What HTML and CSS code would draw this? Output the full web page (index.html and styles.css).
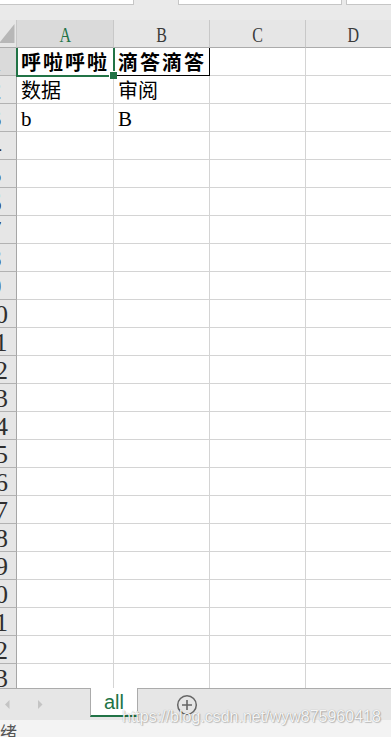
FILE: index.html
```html
<!DOCTYPE html>
<html lang="zh-CN">
<head>
<meta charset="utf-8">
<title>Sheet</title>
<link rel="stylesheet" href="styles.css">
</head>
<body>
<div class="app">
  <div class="topbar">
    <div class="fbox f1"></div>
    <div class="fbox f2"></div>
    <div class="fbox f3"></div>
  </div>

  <div class="colheads">
    <div class="corner">
      <svg width="16" height="27" viewBox="0 0 16 27"><polygon points="0,22 14.5,4 14.5,23 0,23" fill="#b7b7b7"/></svg>
    </div>
    <div class="ch ca sel"><span>A</span></div>
    <div class="ch"><span>B</span></div>
    <div class="ch"><span>C</span></div>
    <div class="ch"><span>D</span></div>
  </div>

  <div class="rows">
    <div class="row">
      <div class="rh sel"><span>1</span></div>
      <div class="c ca a1 cjk bold">呼啦呼啦<div class="selbox"></div><div class="handle"></div></div>
      <div class="c b1 cjk bold">滴答滴答</div>
      <div class="c"></div><div class="c"></div>
    </div>
    <div class="row">
      <div class="rh"><span>2</span></div>
      <div class="c ca cjk">数据</div>
      <div class="c cjk">审阅</div>
      <div class="c"></div><div class="c"></div>
    </div>
    <div class="row">
      <div class="rh"><span>3</span></div>
      <div class="c ca lat">b</div>
      <div class="c lat">B</div>
      <div class="c"></div><div class="c"></div>
    </div>
    <div class="row"><div class="rh"><span>4</span></div><div class="c ca"></div><div class="c"></div><div class="c"></div><div class="c"></div></div>
    <div class="row"><div class="rh"><span>5</span></div><div class="c ca"></div><div class="c"></div><div class="c"></div><div class="c"></div></div>
    <div class="row"><div class="rh"><span>6</span></div><div class="c ca"></div><div class="c"></div><div class="c"></div><div class="c"></div></div>
    <div class="row"><div class="rh"><span>7</span></div><div class="c ca"></div><div class="c"></div><div class="c"></div><div class="c"></div></div>
    <div class="row"><div class="rh"><span>8</span></div><div class="c ca"></div><div class="c"></div><div class="c"></div><div class="c"></div></div>
    <div class="row"><div class="rh"><span>9</span></div><div class="c ca"></div><div class="c"></div><div class="c"></div><div class="c"></div></div>
    <div class="row"><div class="rh"><span>10</span></div><div class="c ca"></div><div class="c"></div><div class="c"></div><div class="c"></div></div>
    <div class="row"><div class="rh"><span>11</span></div><div class="c ca"></div><div class="c"></div><div class="c"></div><div class="c"></div></div>
    <div class="row"><div class="rh"><span>12</span></div><div class="c ca"></div><div class="c"></div><div class="c"></div><div class="c"></div></div>
    <div class="row"><div class="rh"><span>13</span></div><div class="c ca"></div><div class="c"></div><div class="c"></div><div class="c"></div></div>
    <div class="row"><div class="rh"><span>14</span></div><div class="c ca"></div><div class="c"></div><div class="c"></div><div class="c"></div></div>
    <div class="row"><div class="rh"><span>15</span></div><div class="c ca"></div><div class="c"></div><div class="c"></div><div class="c"></div></div>
    <div class="row"><div class="rh"><span>16</span></div><div class="c ca"></div><div class="c"></div><div class="c"></div><div class="c"></div></div>
    <div class="row"><div class="rh"><span>17</span></div><div class="c ca"></div><div class="c"></div><div class="c"></div><div class="c"></div></div>
    <div class="row"><div class="rh"><span>18</span></div><div class="c ca"></div><div class="c"></div><div class="c"></div><div class="c"></div></div>
    <div class="row"><div class="rh"><span>19</span></div><div class="c ca"></div><div class="c"></div><div class="c"></div><div class="c"></div></div>
    <div class="row"><div class="rh"><span>20</span></div><div class="c ca"></div><div class="c"></div><div class="c"></div><div class="c"></div></div>
    <div class="row"><div class="rh"><span>21</span></div><div class="c ca"></div><div class="c"></div><div class="c"></div><div class="c"></div></div>
    <div class="row"><div class="rh"><span>22</span></div><div class="c ca"></div><div class="c"></div><div class="c"></div><div class="c"></div></div>
    <div class="row"><div class="rh"><span>23</span></div><div class="c ca"></div><div class="c"></div><div class="c"></div><div class="c"></div></div>
  </div>

  <div class="tabbar">
    <svg class="nav" width="90" height="31" viewBox="0 0 90 31">
      <polygon points="9.5,11 9.5,20 5,15.5" fill="#c4c4c4"/>
      <polygon points="38,11 38,20 42.5,15.5" fill="#c4c4c4"/>
    </svg>
    <div class="tab">all</div>
    <svg class="add" width="22" height="22" viewBox="0 0 22 22">
      <circle cx="11" cy="11" r="9.3" fill="none" stroke="#666" stroke-width="1.5"/>
      <path d="M11 6v10M6 11h10" stroke="#666" stroke-width="1.6" fill="none"/>
    </svg>
  </div>

  <div class="status"><span>就绪</span></div>

  <div class="wm">https://blog.csdn.net/wyw875960418</div>
</div>
</body>
</html>
```

FILE: styles.css
```css
* { box-sizing: border-box; }
html, body { margin: 0; padding: 0; }
body {
  width: 391px;
  height: 737px;
  overflow: hidden;
  background: #e6e6e6;
  font-family: "Liberation Serif", "Noto Sans CJK SC", serif;
}
.app {
  position: relative;
  width: 391px;
  height: 737px;
  overflow: hidden;
  display: flex;
  flex-direction: column;
}

/* top strip (formula bar remnants) */
.topbar {
  height: 20px;
  flex: none;
  display: flex;
  align-items: flex-start;
  background: #eaeaea;
}
.fbox {
  flex: none;
  height: 5px;
  background: #fff;
  border: 1px solid #c6c6c6;
  border-top: 0;
}
.f1 { width: 135px; margin-left: -1px; }
.f2 { width: 164px; margin-left: 44px; }
.f3 { width: 60px; margin-left: 4px; }

/* column headers */
.colheads {
  height: 28px;
  flex: none;
  display: flex;
  background: #e6e6e6;
}
.corner {
  width: 17px;
  flex: none;
  border-right: 1px solid #c8c8c8;
  border-bottom: 1px solid #ababab;
  display: flex;
}
.corner svg { display: block; }
.ch {
  width: 96px;
  flex: none;
  border-right: 1px solid #c8c8c8;
  border-bottom: 1px solid #ababab;
  text-align: center;
  font-size: 20px;
  line-height: 24px;
  padding-top: 3px;
  color: #3a3a3a;
}
.ch span { display: inline-block; transform: scaleX(0.8); }
.ch.ca { width: 97px; }
.ch.sel { background: #dadada; color: #217346; }

/* grid */
.rows {
  height: 640px;
  flex: none;
  overflow: hidden;
  background: #fff;
}
.row {
  display: flex;
  height: 28px;
}
.rh {
  width: 17px;
  flex: none;
  background: #e6e6e6;
  border-right: 1px solid #a6a6a6;
  border-bottom: 1px solid #b2b2b2;
  overflow: hidden;
}
.rh.sel { background: #dadada; }
.rh span {
  display: block;
  width: 40px;
  margin-left: -25px;
  text-align: center;
  font-size: 26px;
  line-height: 24px;
  padding-top: 3px;
  color: #2f2f2f;
}
.c {
  width: 96px;
  flex: none;
  border-right: 1px solid #d4d4d4;
  border-bottom: 1px solid #d4d4d4;
  padding-left: 4px;
  white-space: nowrap;
  color: #000;
}
.c.ca { width: 97px; }
.cjk {
  font-family: "Noto Sans CJK SC", sans-serif;
  font-size: 20px;
  line-height: 27px;
}
.bold {
  font-weight: 700;
  letter-spacing: 2px;
}
.lat {
  font-family: "Liberation Serif", serif;
  font-size: 21px;
  line-height: 23px;
  padding-top: 4px;
}
.a1 { position: relative; }
.b1 {
  border-right-color: #000;
  border-bottom-color: #000;
}
.selbox {
  position: absolute;
  left: -1px;
  top: -2px;
  width: 99px;
  height: 31px;
  border: 2px solid #217346;
}
.handle {
  position: absolute;
  left: 92px;
  top: 23px;
  width: 8px;
  height: 8px;
  background: #217346;
  border-left: 1px solid #fff;
  border-top: 1px solid #fff;
}

/* sheet tabs */
.tabbar {
  height: 32px;
  flex: none;
  display: flex;
  align-items: flex-start;
  background: #e6e6e6;
  border-top: 1px solid #ababab;
}
.nav { display: block; flex: none; }
.tab {
  width: 48px;
  height: 29px;
  flex: none;
  margin-top: -1px;
  padding-top: 1px;
  background: #fff;
  border-left: 1px solid #ababab;
  border-right: 1px solid #ababab;
  border-bottom: 2px solid #217346;
  text-align: center;
  font-family: "Liberation Sans", sans-serif;
  font-size: 20px;
  line-height: 26px;
  color: #217346;
}
.add {
  display: block;
  flex: none;
  margin-left: 38px;
  margin-top: 5px;
}

/* status bar */
.status {
  flex: 1;
  background: #f3f3f3;
  overflow: hidden;
  white-space: nowrap;
  font-family: "Noto Sans CJK SC", sans-serif;
  font-size: 17px;
  line-height: 17px;
  padding-top: 3px;
  color: #555;
}
.status span { display: inline-block; margin-left: -17px; }

/* watermark overlay */
.wm {
  position: absolute;
  left: 122px;
  top: 709px;
  font-family: "Liberation Sans", sans-serif;
  font-size: 16px;
  line-height: 16px;
  white-space: nowrap;
  color: rgba(255, 255, 255, 0.92);
  text-shadow: 0 0 1px rgba(0, 0, 0, 0.35), 1px 1px 1px rgba(0, 0, 0, 0.2);
}
```
